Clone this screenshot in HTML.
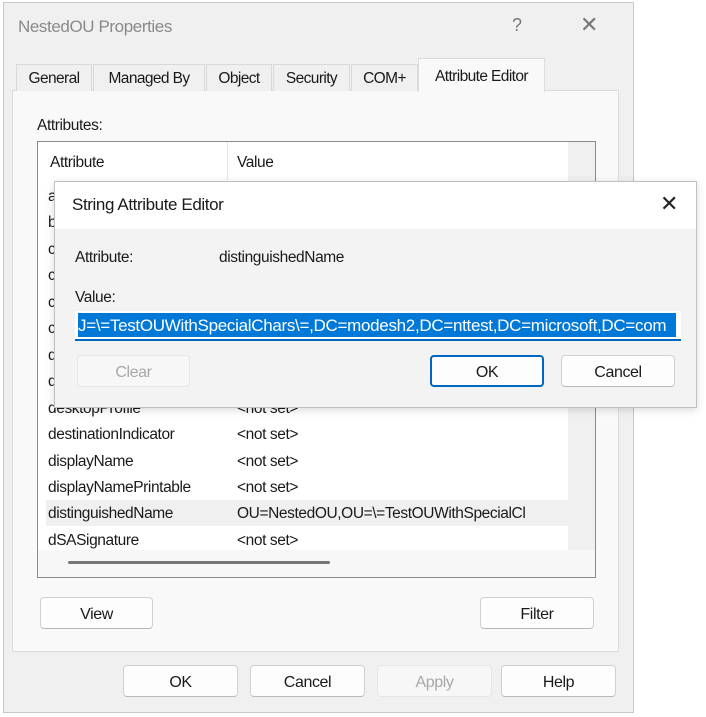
<!DOCTYPE html>
<html><head><style>
*{margin:0;padding:0;box-sizing:border-box}
body{width:706px;height:717px;background:#fff;position:relative;overflow:hidden;font-family:"Liberation Sans",sans-serif;font-size:15px;color:#1a1a1a;letter-spacing:-0.4px}
.a{position:absolute}
.btn{position:absolute;height:32px;border:1px solid #d0d0d0;border-bottom-color:#b8b8b8;border-radius:4px;background:#fdfdfd;text-align:center;line-height:33px;font-size:16px}
.tab{position:absolute;top:64px;height:27px;border:1px solid #d9d9d9;border-bottom:none;background:#f0f0f0;text-align:center;line-height:28px;font-size:15.5px;letter-spacing:-0.6px}
.row{position:absolute;left:48px;height:26px;line-height:28px;font-size:15.5px;white-space:nowrap}
.v{position:absolute;left:237px}
</style></head><body>
<div class="a" style="left:3px;top:2px;width:631px;height:711px;background:#f0f0f0;border:1px solid #c8c8c8"></div>
<div class="a" style="left:18px;top:17px;font-size:17px;color:#8a8a8a">NestedOU Properties</div>
<div class="a" style="left:512px;top:15px;font-size:18px;color:#777">?</div>
<div class="a" style="left:580px;top:12px;font-size:22px;color:#777">✕</div>
<div class="a" style="left:12px;top:90px;width:607px;height:562px;background:#f9f9f9;border:1px solid #dcdcdc"></div>
<div class="tab" style="left:16px;width:76px">General</div>
<div class="tab" style="left:93px;width:112px">Managed By</div>
<div class="tab" style="left:206px;width:66px">Object</div>
<div class="tab" style="left:273px;width:77px">Security</div>
<div class="tab" style="left:351px;width:67px">COM+</div>
<div class="tab" style="left:418px;top:58px;height:34px;width:127px;background:#f9f9f9;line-height:36px;border-color:#dcdcdc">Attribute Editor</div>
<div class="a" style="left:37px;top:117px;font-size:15.5px">Attributes:</div>
<div class="a" style="left:37px;top:141px;width:559px;height:437px;background:#f7f7f7;border:1px solid #8a8a8a"></div>
<div class="a" style="left:38px;top:142px;width:530px;height:408px;background:#fff"></div>
<div class="a" style="left:227px;top:142px;width:1px;height:38px;background:#e5e5e5"></div>
<div class="a" style="left:50px;top:154px;font-size:15.5px">Attribute</div>
<div class="a" style="left:237px;top:154px;font-size:15.5px">Value</div>
<div class="a" style="left:568px;top:142px;width:27px;height:408px;background:#f0f0f0"></div>
<div class="row" style="top:183px">a</div><div class="row" style="top:209px">b</div>
<div class="row" style="top:236px">c</div><div class="row" style="top:262px">c</div>
<div class="row" style="top:289px">c</div><div class="row" style="top:315px">c</div>
<div class="row" style="top:342px">d</div><div class="row" style="top:368px">d</div>
<div class="row" style="top:395px">desktopProfile<span class="v" style="left:189px">&lt;not set&gt;</span></div>
<div class="row" style="top:421px">destinationIndicator<span class="v" style="left:189px">&lt;not set&gt;</span></div>
<div class="row" style="top:448px">displayName<span class="v" style="left:189px">&lt;not set&gt;</span></div>
<div class="row" style="top:474px">displayNamePrintable<span class="v" style="left:189px">&lt;not set&gt;</span></div>
<div class="a" style="left:46px;top:500px;width:522px;height:26px;background:#f0f0f0"></div>
<div class="row" style="top:500px">distinguishedName<span class="v" style="left:189px">OU=NestedOU,OU=\=TestOUWithSpecialCl</span></div>
<div class="row" style="top:527px">dSASignature<span class="v" style="left:189px">&lt;not set&gt;</span></div>
<div class="a" style="left:68px;top:561px;width:262px;height:3px;background:#777;border-radius:2px"></div>
<div class="btn" style="left:40px;top:597px;width:113px">View</div>
<div class="btn" style="left:480px;top:597px;width:114px">Filter</div>
<div class="btn" style="left:123px;top:665px;width:115px">OK</div>
<div class="btn" style="left:250px;top:665px;width:115px">Cancel</div>
<div class="btn" style="left:377px;top:665px;width:115px;color:#a8a8a8;border-color:#e6e6e6;background:#f7f7f7">Apply</div>
<div class="btn" style="left:501px;top:665px;width:115px">Help</div>

<div class="a" style="left:54px;top:181px;width:643px;height:227px;background:#f3f3f3;border:1px solid #c0c0c0;box-shadow:0 2px 8px rgba(0,0,0,.15)"></div>
<div class="a" style="left:55px;top:182px;width:641px;height:47px;background:#fff"></div>
<div class="a" style="left:72px;top:195px;font-size:17px">String Attribute Editor</div>
<div class="a" style="left:660px;top:191px;font-size:22px;color:#222">✕</div>
<div class="a" style="left:75px;top:249px;font-size:15.5px">Attribute:</div>
<div class="a" style="left:219px;top:249px;font-size:15.5px">distinguishedName</div>
<div class="a" style="left:75px;top:289px;font-size:15.5px">Value:</div>
<div class="a" style="left:75px;top:311px;width:606px;height:30px;background:#fff;border-bottom:2px solid #0067c0"></div>
<div class="a" style="left:78px;top:313px;width:598px;height:24px;background:#0078d7;color:#fff;font-size:17px;line-height:26px;white-space:nowrap;overflow:hidden;letter-spacing:-0.3px">J=\=TestOUWithSpecialChars\=,DC=modesh2,DC=nttest,DC=microsoft,DC=com</div>
<div class="btn" style="left:77px;top:355px;width:113px;color:#a8a8a8;border-color:#e6e6e6;background:#f7f7f7">Clear</div>
<div class="btn" style="left:430px;top:355px;width:114px;border:2px solid #0067c0;line-height:31px">OK</div>
<div class="btn" style="left:561px;top:355px;width:114px">Cancel</div>
</body></html>
